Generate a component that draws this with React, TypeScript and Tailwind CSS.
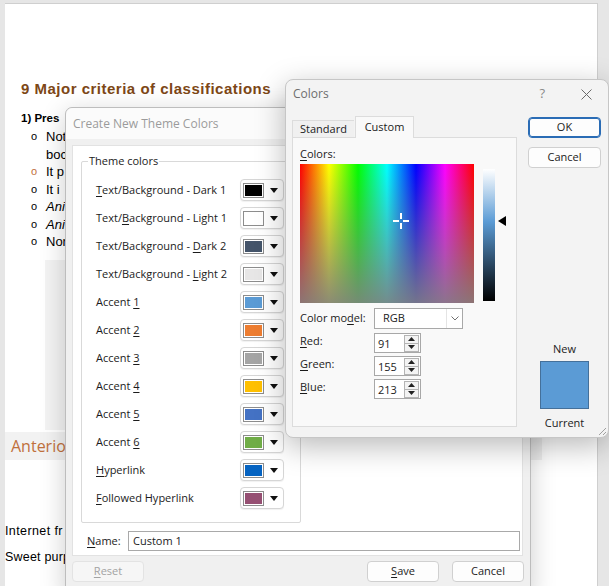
import React from "react";

type Row = { pre: string; u: string; post: string; color: string };

const rows: Row[] = [
  { pre: "", u: "T", post: "ext/Background - Dark 1", color: "bg-[#000000]" },
  { pre: "Text/", u: "B", post: "ackground - Light 1", color: "bg-[#ffffff]" },
  { pre: "Text/Background - ", u: "D", post: "ark 2", color: "bg-[#44546a]" },
  { pre: "Text/Background - ", u: "L", post: "ight 2", color: "bg-[#e7e6e6]" },
  { pre: "Accent ", u: "1", post: "", color: "bg-[#5b9bd5]" },
  { pre: "Accent ", u: "2", post: "", color: "bg-[#ed7d31]" },
  { pre: "Accent ", u: "3", post: "", color: "bg-[#a5a5a5]" },
  { pre: "Accent ", u: "4", post: "", color: "bg-[#ffc000]" },
  { pre: "Accent ", u: "5", post: "", color: "bg-[#4472c4]" },
  { pre: "Accent ", u: "6", post: "", color: "bg-[#70ad47]" },
  { pre: "", u: "H", post: "yperlink", color: "bg-[#0563c1]" },
  { pre: "", u: "F", post: "ollowed Hyperlink", color: "bg-[#954f72]" },
];

function Tri() {
  return (
    <svg width="8" height="5" viewBox="0 0 8 5" className="block">
      <path d="M0 0 H8 L4 5 Z" fill="#111" />
    </svg>
  );
}

function Spinner() {
  return (
    <div className="ml-auto mr-[1px] w-[15px] h-[17px] border border-[#b4b4b4] bg-[#f3f3f3] flex flex-col">
      <div className="flex-1 flex items-center justify-center border-b border-[#b4b4b4]">
        <svg width="7" height="4" viewBox="0 0 7 4" className="block">
          <path d="M0 4 H7 L3.5 0 Z" fill="#222" />
        </svg>
      </div>
      <div className="flex-1 flex items-center justify-center">
        <svg width="7" height="4" viewBox="0 0 7 4" className="block">
          <path d="M0 0 H7 L3.5 4 Z" fill="#222" />
        </svg>
      </div>
    </div>
  );
}

function NumField({ label, u, value }: { label: string; u: string; value: string }) {
  return (
    <div className="flex items-center h-[20px]">
      <div className="w-[74px] -mt-[4px]">
        <span className="underline underline-offset-2">{u}</span>
        {label}
      </div>
      <div className="w-[47px] h-[20px] border border-[#a8a8a8] bg-white flex items-center pl-[3px]">
        <span className="mt-[2px]">{value}</span>
        <Spinner />
      </div>
    </div>
  );
}

function Bullet({ text, italic, orange, noDot }: { text: string; italic?: boolean; orange?: boolean; noDot?: boolean }) {
  return (
    <div className="flex h-[17.5px] leading-[17.5px] whitespace-nowrap">
      <span className={`shrink-0 w-[25px] pl-[10px] text-[11px] ${orange ? "text-[#c0703c]" : ""}`}>{noDot ? "" : "o"}</span>
      <span className={italic ? "italic" : ""}>{text}</span>
    </div>
  );
}

export default function App() {
  const ui = "font-['Open_Sans',sans-serif] text-[11px] text-[#1b1b1b]";
  return (
    <div className="relative w-[609px] h-[586px] overflow-hidden bg-[#e6e6e6]">
      {/* Document page */}
      <div className="ml-[5px] mt-[3px] w-[593px] h-[583px] bg-white border-t border-r border-[#cfcfcf] font-['Liberation_Sans',sans-serif] text-black">
        <div className="pl-[16px] pt-[75px]">
          <div className="h-[20px] leading-[20px] text-[15px] font-bold text-[#7d4716] tracking-[0.5px]">
            9 Major criteria of classifications
          </div>
          <div className="mt-[10px] h-[18px] leading-[18px] text-[11.5px] font-bold whitespace-nowrap">1) Pres</div>
          <div className="text-[13px] mt-[1px]">
            <Bullet text="Not" />
            <Bullet text="boc" noDot />
            <Bullet text="It p" orange />
            <Bullet text="It i" />
            <Bullet text="Ani" italic />
            <Bullet text="Ani" italic />
            <Bullet text="Nor" />
          </div>
        </div>
        <div className="ml-[40px] mt-[9px] w-[120px] h-[170px] bg-[#f3f3f3]" />
        <div className="mt-[2px] w-[537px] h-[28px] bg-[#f2f2f2] flex items-center pl-[6px] font-['Open_Sans',sans-serif] text-[16px] text-[#c0703c]">
          <span className="whitespace-nowrap">Anterio</span>
        </div>
        <div className="mt-[62px] h-[18px] leading-[18px] text-[12.5px] tracking-[0.4px] whitespace-nowrap">Internet fr</div>
        <div className="mt-[8px] h-[18px] leading-[18px] text-[12.5px] tracking-[0.2px] whitespace-nowrap">Sweet purp</div>
      </div>

      {/* Create New Theme Colors dialog */}
      <div className={`absolute left-[65px] top-[107px] w-[466px] h-[490px] rounded-t-[7px] border border-[#bdbdbd] bg-[#f0f0f0] shadow-[0_6px_26px_rgba(0,0,0,0.2)] ${ui}`}>
        <div className="h-[31px] flex items-center pl-[7px] bg-[#fbfbfb] rounded-t-[7px] text-[12px] text-[#9b9b9b]">
          Create New Theme Colors
        </div>
        <div className="ml-[6px] mt-[6px] w-[451px] h-[411px] bg-white border border-[#e2e2e2]">
          <div className="relative ml-[8px] mt-[15px] w-[220px] h-[362px] border border-[#d9d9d9] rounded-[2px]">
            <span className="absolute -top-[9px] left-[6px] bg-white px-[1px] leading-[16px]">Theme colors</span>
            <div className="pt-[17px] flex flex-col gap-[6px]">
              {rows.map((r, i) => (
                <div key={i} className="flex items-center justify-between h-[22px] pl-[14px] pr-[16px]">
                  <span>
                    {r.pre}
                    <span className="underline underline-offset-2">{r.u}</span>
                    {r.post}
                  </span>
                  <div className="w-[44px] h-[22px] rounded-[4px] border border-[#d6d6d6] bg-white flex items-center pl-[2px] gap-[6px] shadow-[0_1px_1px_rgba(0,0,0,0.06)]">
                    <div className="w-[21px] h-[15px] border border-[#8d8d8d] p-[1px] bg-white">
                      <div className={`w-full h-full ${r.color}`} />
                    </div>
                    <Tri />
                  </div>
                </div>
              ))}
            </div>
          </div>
          <div className="flex items-center mt-[8px] ml-[14px]">
            <span className="w-[41px]">
              <span className="underline underline-offset-2">N</span>ame:
            </span>
            <div className="w-[392px] h-[20px] border border-[#a9a9a9] flex items-center pl-[4px]">Custom 1</div>
          </div>
        </div>
        <div className="flex mt-[5px] ml-[6px] mr-[6px]">
          <div className="w-[72px] h-[21px] rounded-[4px] border border-[#e3e3e3] bg-[#f6f6f6] flex items-center justify-center text-[#a3a3a3]">
            <span className="underline underline-offset-2">R</span>eset
          </div>
          <div className="ml-auto w-[72px] h-[21px] rounded-[4px] border border-[#d0d0d0] bg-[#fdfdfd] flex items-center justify-center">
            <span className="underline underline-offset-2">S</span>ave
          </div>
          <div className="ml-[13px] w-[72px] h-[21px] rounded-[4px] border border-[#d0d0d0] bg-[#fdfdfd] flex items-center justify-center">
            Cancel
          </div>
        </div>
      </div>

      {/* Colors dialog */}
      <div className={`absolute left-[285px] top-[79px] w-[324px] h-[359px] rounded-[8px] border border-[#c6c6c6] bg-[#f3f3f3] shadow-[0_8px_30px_rgba(0,0,0,0.28)] ${ui}`}>
        <div className="h-[28px] flex items-center pl-[7px] text-[12px] text-[#6e6e6e]">
          <span>Colors</span>
          <span className="ml-auto mr-[36px] text-[13px] text-[#8a8a8a]">?</span>
          <svg width="11" height="11" viewBox="0 0 11 11" className="mr-[16px] block">
            <path d="M0.5 0.5 L10.5 10.5 M10.5 0.5 L0.5 10.5" stroke="#6a6a6a" strokeWidth="1" />
          </svg>
        </div>
        <div className="flex">
          <div className="ml-[6px]">
            <div className="flex items-end h-[29px]">
              <div className="w-[62px] h-[17px] border-t border-l border-[#dcdcdc] bg-[#f0f0f0] flex items-center justify-center">
                Standard
              </div>
              <div className="relative z-10 -mb-px ml-[1px] w-[59px] h-[22px] border-t border-l border-r border-[#dcdcdc] bg-[#f9f9f9] flex items-center justify-center pb-[1px]">
                Custom
              </div>
            </div>
            <div className="w-[225px] h-[290px] border border-[#dcdcdc] bg-[#f9f9f9] pl-[7px] pt-[8px]">
              <div className="h-[16px] leading-[16px]">
                <span className="underline underline-offset-2">C</span>olors:
              </div>
              <div className="flex mt-[2px]">
                <div className="relative w-[174px] h-[139px] bg-[linear-gradient(to_bottom,rgba(128,128,128,0)_0%,rgba(128,128,128,0.9)_100%),linear-gradient(to_right,#ff0000_0%,#ffff00_16.67%,#00ff00_33.33%,#00ffff_50%,#0000ff_66.67%,#ff00ff_83.33%,#ff0000_100%)]">
                  <svg width="20" height="20" viewBox="0 0 20 20" className="absolute left-[91px] top-[47px] block">
                    <rect x="2" y="9" width="6" height="2" fill="#fff" />
                    <rect x="12" y="9" width="6" height="2" fill="#fff" />
                    <rect x="9" y="2" width="2" height="6" fill="#fff" />
                    <rect x="9" y="12" width="2" height="6" fill="#fff" />
                  </svg>
                </div>
                <div className="relative ml-[9px] mt-[5px] w-[12px] h-[132px] bg-[linear-gradient(to_bottom,#ffffff_0%,#5b9bd5_40%,#000000_100%)]">
                  <svg width="8" height="10" viewBox="0 0 8 10" className="absolute left-[15px] top-[47px] block">
                    <path d="M0 5 L8 0 V10 Z" fill="#000" />
                  </svg>
                </div>
              </div>
              <div className="flex items-center mt-[5px] h-[21px]">
                <span className="w-[74px]">
                  Color mo<span className="underline underline-offset-2">d</span>el:
                </span>
                <div className="w-[89px] h-[21px] border border-[#a8a8a8] bg-white flex items-center">
                  <span className="pl-[8px] flex-1">RGB</span>
                  <div className="w-[16px] h-full border-l border-[#e4e4e4] flex items-center justify-center">
                    <svg width="8" height="5" viewBox="0 0 8 5" className="block">
                      <path d="M0.5 0.5 L4 4 L7.5 0.5" stroke="#707070" strokeWidth="1" fill="none" />
                    </svg>
                  </div>
                </div>
              </div>
              <div className="mt-[4px] flex flex-col gap-[3px]">
                <NumField u="R" label="ed:" value="91" />
                <NumField u="G" label="reen:" value="155" />
                <NumField u="B" label="lue:" value="213" />
              </div>
            </div>
          </div>
          <div className="ml-[11px] w-[73px] flex flex-col items-center">
            <div className="mt-[9px] w-[73px] h-[21px] rounded-[4px] border border-[#2a6cb5] bg-[#fdfdfd] flex items-center justify-center shadow-[inset_0_0_0_1px_#2a6cb5]">
              OK
            </div>
            <div className="mt-[9px] w-[73px] h-[21px] rounded-[4px] border border-[#d0d0d0] bg-[#fdfdfd] flex items-center justify-center">
              Cancel
            </div>
            <div className="mt-[173px] h-[16px] leading-[16px]">New</div>
            <div className="mt-[4px] w-[49px] h-[48px] border border-[#44709a] bg-[#5b9bd5]" />
            <div className="mt-[6px] h-[16px] leading-[16px]">Current</div>
          </div>
        </div>
        <svg width="10" height="10" viewBox="0 0 10 10" className="absolute right-[1px] bottom-[1px] block">
          <path d="M9 2 L2 9 M9 6 L6 9" stroke="#a0a0a0" strokeWidth="1" />
        </svg>
      </div>
    </div>
  );
}
